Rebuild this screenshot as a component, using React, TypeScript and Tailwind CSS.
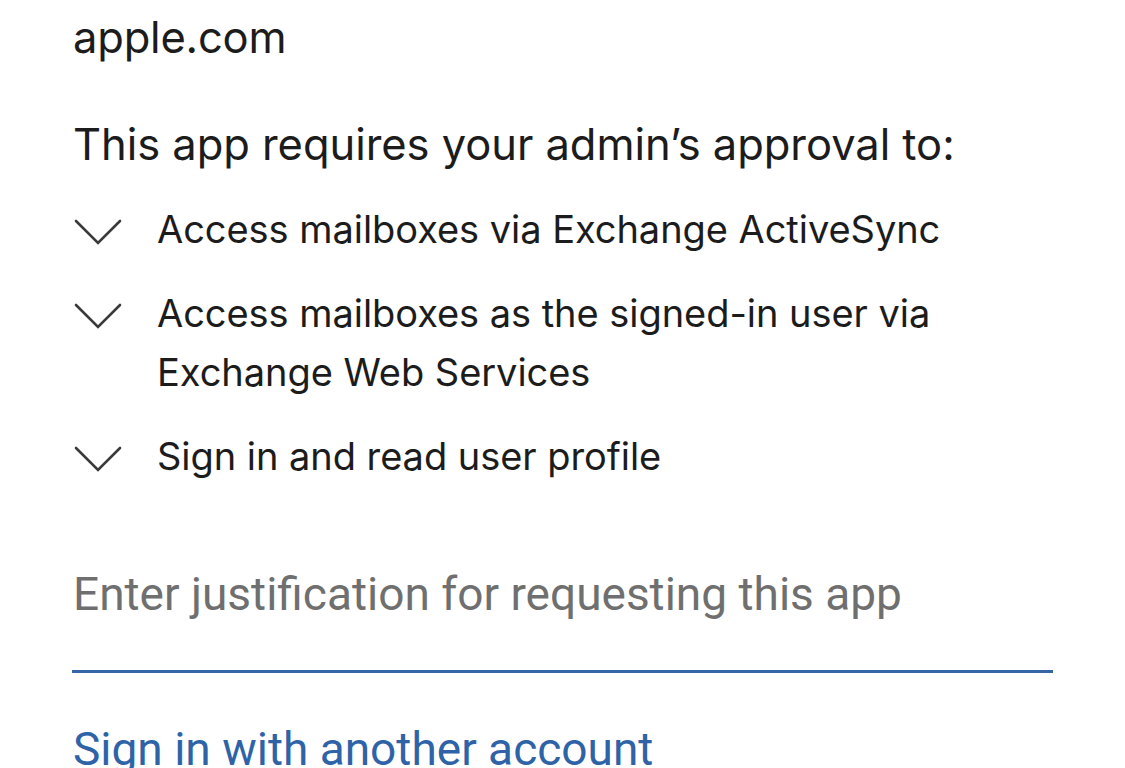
import React from "react";

const Chevron = () => (
  <svg width="48" height="26" viewBox="0 0 48 26" className="shrink-0 block">
    <polyline points="2,2 24,24 46,2" fill="none" stroke="#3a3a3a" strokeWidth="2.6" strokeLinecap="round" strokeLinejoin="miter" />
  </svg>
);

const items = [
  ["Access mailboxes via Exchange ActiveSync"],
  ["Access mailboxes as the signed-in user via", "Exchange Web Services"],
  ["Sign in and read user profile"],
];

export default function App() {
  return (
    <div className="w-[1125px] h-[768px] overflow-hidden bg-white text-[#1c1c1c]" style={{ fontFamily: "Inter, 'Noto Sans', sans-serif" }}>
      <div className="pl-[73px] pr-[72px]">
        <div className="text-[43.5px] leading-[52px] pt-[11px] tracking-[-0.2px]">apple.com</div>
        <div className="text-[43.5px] leading-[52px] mt-[55px] tracking-[-0.05px] whitespace-nowrap">This app requires your admin’s approval to:</div>
        <div className="mt-[30px] flex flex-col gap-[25px]">
          {items.map((lines, i) => (
            <div key={i} className="flex items-start">
              <div className="w-[84px] pt-[19px] pl-[1px]">
                <Chevron />
              </div>
              <div className="text-[38px] leading-[59px] tracking-[-0.05px] whitespace-nowrap">
                {lines.map((l, j) => (
                  <div key={j}>{l}</div>
                ))}
              </div>
            </div>
          ))}
        </div>
        <div className="mt-[81px] h-[106px] border-b-[3px] border-[#3565a6] w-[981px] -ml-[1px]">
          <div className="pl-[1px] text-[46px] leading-[54px] text-[#6f6f6f] whitespace-nowrap" style={{ fontFamily: "Roboto, sans-serif" }}>Enter justification for requesting this app</div>
        </div>
        <div className="mt-[49px] text-[46px] leading-[54px] text-[#2f63a8] whitespace-nowrap" style={{ fontFamily: "Roboto, sans-serif" }}>Sign in with another account</div>
      </div>
    </div>
  );
}
